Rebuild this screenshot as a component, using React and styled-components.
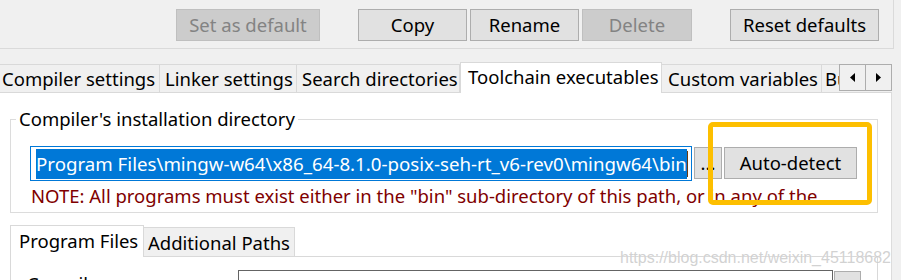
import React from 'react';
import styled, { createGlobalStyle } from 'styled-components';

const GlobalStyle = createGlobalStyle`
  html, body {
    margin: 0;
    padding: 0;
    background: #f0f0f0;
    overflow: hidden;
  }
  body {
    font-family: "Noto Sans", "Liberation Sans", sans-serif;
    font-size: 18.5px;
    color: #000000;
  }
`;

const Page = styled.div`
  position: relative;
  width: 901px;
  height: 280px;
  overflow: hidden;
  display: flex;
  flex-direction: column;
`;

/* top button bar */
const TopBar = styled.div`
  flex-shrink: 0;
  width: 894px;
  height: 49px;
  box-sizing: border-box;
  border-right: 1px solid #dadada;
  border-bottom: 1px solid #dadada;
  display: flex;
  align-items: flex-start;
  gap: 38px;
  padding: 9px 0 0 176px;
`;

const ButtonGroup = styled.div`
  display: flex;
  gap: 3px;
`;

const Button = styled.button`
  width: ${(p) => p.$w}px;
  height: 32px;
  padding: 0;
  margin: 0;
  font-family: inherit;
  font-size: 18.5px;
  line-height: 1;
  background: ${(p) => (p.disabled ? '#cccccc' : '#e1e1e1')};
  border: 1px solid ${(p) => (p.disabled ? '#bfbfbf' : '#adadad')};
  color: ${(p) => (p.disabled ? '#838383' : '#000000')};
  border-radius: 0;
`;

/* main tab strip */
const TabStrip = styled.div`
  flex-shrink: 0;
  margin-top: 13px;
  height: 30px;
  display: flex;
  align-items: flex-start;
`;

const TabList = styled.div`
  width: 839px;
  height: 31px;
  overflow: hidden;
  display: flex;
  align-items: flex-start;
  flex-shrink: 0;
  position: relative;
  z-index: 1;
`;

const Tab = styled.div`
  flex-shrink: 0;
  box-sizing: border-box;
  width: ${(p) => p.$w}px;
  height: ${(p) => (p.$active ? 31 : 28)}px;
  margin-top: ${(p) => (p.$active ? 0 : 2)}px;
  background: ${(p) => (p.$active ? '#ffffff' : '#f0f0f0')};
  border-top: 1px solid #d9d9d9;
  border-right: 1px solid #d9d9d9;
  border-left: ${(p) => (p.$active ? '1px solid #d9d9d9' : 'none')};
  padding-left: ${(p) => p.$pad}px;
  display: flex;
  align-items: center;
  white-space: nowrap;
  padding-bottom: ${(p) => (p.$active ? 3 : 0)}px;
`;

const ArrowGroup = styled.div`
  margin-top: 2px;
  display: flex;
`;

const ArrowButton = styled.div`
  width: 27px;
  height: 27px;
  box-sizing: border-box;
  background: #f0f0f0;
  border: 1px solid #adadad;
  margin-left: ${(p) => (p.$second ? -1 : 0)}px;
  display: flex;
  align-items: center;
  justify-content: center;
`;

/* white page */
const Panel = styled.div`
  width: 892px;
  flex: 1 0 auto;
  box-sizing: border-box;
  background: #ffffff;
  border-top: 1px solid #d9d9d9;
  border-right: 1px solid #dcdcdc;
  display: flex;
  flex-direction: column;
`;

const GroupBox = styled.fieldset`
  margin: 14px 13px 0 10px;
  padding: 15px 0 4px 19px;
  border: 1px solid #dcdcdc;
  min-width: 0;
`;

const Legend = styled.legend`
  margin-left: -14px;
  padding: 0 3px;
  line-height: 24px;
  font-size: 18.5px;
`;

const InputRow = styled.div`
  display: flex;
  align-items: flex-start;
  gap: 2px;
`;

const PathInput = styled.div`
  width: 662px;
  height: 35px;
  box-sizing: border-box;
  border: 1px solid #0078d7;
  padding: 0 5px;
  display: flex;
  align-items: center;
  overflow: hidden;
  white-space: nowrap;
`;

const Selection = styled.span`
  background: #0078d7;
  color: #ffffff;
  line-height: 30px;
  font-size: 18.7px;
`;

const Caret = styled.span`
  flex-shrink: 0;
  width: 1px;
  height: 26px;
  background: #6b3a10;
`;

const SmallButton = styled(Button)`
  margin-top: 1px;
`;

const Note = styled.div`
  margin-top: 3px;
  margin-left: 1px;
  line-height: 24px;
  color: #800000;
  white-space: nowrap;
`;

/* inner tab set */
const SubTabBar = styled.div`
  margin: 13px 13px 0 10px;
  height: 31px;
  box-sizing: border-box;
  border-bottom: 1px solid #d9d9d9;
  display: flex;
  align-items: flex-end;
`;

const SubTab = styled.div`
  box-sizing: border-box;
  width: ${(p) => p.$w}px;
  height: ${(p) => (p.$active ? 32 : 29)}px;
  margin-bottom: ${(p) => (p.$active ? -1 : 0)}px;
  background: ${(p) => (p.$active ? '#ffffff' : '#f0f0f0')};
  border: 1px solid #d9d9d9;
  border-bottom: none;
  border-left: ${(p) => (p.$active ? '1px solid #d9d9d9' : 'none')};
  padding-left: ${(p) => p.$pad}px;
  display: flex;
  align-items: center;
  padding-bottom: ${(p) => (p.$active ? 3 : 0)}px;
  white-space: nowrap;
`;

const SubPanel = styled.div`
  margin: 0 13px 0 10px;
  flex: 1;
  border-left: 1px solid #d9d9d9;
  border-right: 1px solid #d9d9d9;
  padding: 13px 0 0 16px;
  display: grid;
  grid-template-columns: 210px 595px 27px;
  column-gap: 1px;
  align-items: start;
`;

const FieldLabel = styled.div`
  line-height: 24px;
  margin-top: 2px;
`;

const FieldInput = styled.div`
  height: 30px;
  border: 1px solid #646464;
  background: #ffffff;
`;

const FieldButton = styled.div`
  margin-top: 1px;
  height: 30px;
  background: #e1e1e1;
  border: 1px solid #adadad;
`;

/* overlays */
const Highlight = styled.div`
  position: absolute;
  left: 708px;
  top: 122px;
  width: 164px;
  height: 83px;
  box-sizing: border-box;
  border: 5px solid #fdbf00;
  border-radius: 5px;
  pointer-events: none;
`;

const Watermark = styled.div`
  position: absolute;
  left: 620px;
  top: 249px;
  font-family: "Liberation Sans", Arial, sans-serif;
  font-size: 16px;
  color: rgba(190, 190, 190, 0.7);
  text-shadow: 0 0 1px rgba(255, 255, 255, 0.9);
  white-space: nowrap;
  pointer-events: none;
`;

const Triangle = ({ dir }) => (
  <svg width="5" height="9" viewBox="0 0 5 9">
    {dir === 'left' ? (
      <polygon points="5,0 5,9 0,4.5" fill="#000" />
    ) : (
      <polygon points="0,0 0,9 5,4.5" fill="#000" />
    )}
  </svg>
);

const tabs = [
  { label: 'Compiler settings', w: 160, pad: 2 },
  { label: 'Linker settings', w: 137, pad: 5 },
  { label: 'Search directories', w: 163, pad: 5 },
  { label: 'Toolchain executables', w: 202, pad: 7, active: true },
  { label: 'Custom variables', w: 160, pad: 6 },
  { label: 'Build options', w: 140, pad: 3 },
];

export default function App() {
  return (
    <Page>
      <GlobalStyle />
      <TopBar>
        <Button $w={144} disabled>
          Set as default
        </Button>
        <ButtonGroup>
          <Button $w={109}>Copy</Button>
          <Button $w={109}>Rename</Button>
          <Button $w={110} disabled>
            Delete
          </Button>
        </ButtonGroup>
        <Button $w={149}>Reset defaults</Button>
      </TopBar>

      <TabStrip>
        <TabList>
          {tabs.map((t) => (
            <Tab key={t.label} $w={t.w} $pad={t.pad} $active={t.active}>
              {t.label}
            </Tab>
          ))}
        </TabList>
        <ArrowGroup>
          <ArrowButton>
            <Triangle dir="left" />
          </ArrowButton>
          <ArrowButton $second>
            <Triangle dir="right" />
          </ArrowButton>
        </ArrowGroup>
      </TabStrip>

      <Panel>
        <GroupBox>
          <Legend>Compiler's installation directory</Legend>
          <InputRow>
            <PathInput>
              <Selection>Program Files\mingw-w64\x86_64-8.1.0-posix-seh-rt_v6-rev0\mingw64\bin</Selection>
              <Caret />
            </PathInput>
            <SmallButton $w={28}>...</SmallButton>
            <SmallButton $w={133}>Auto-detect</SmallButton>
          </InputRow>
          <Note>NOTE: All programs must exist either in the "bin" sub-directory of this path, or in any of the</Note>
        </GroupBox>

        <SubTabBar>
          <SubTab $w={134} $pad={8} $active>
            Program Files
          </SubTab>
          <SubTab $w={151} $pad={4}>
            Additional Paths
          </SubTab>
        </SubTabBar>
        <SubPanel>
          <FieldLabel>Compiler:</FieldLabel>
          <FieldInput />
          <FieldButton />
        </SubPanel>
      </Panel>

      <Highlight />
      <Watermark>https://blog.csdn.net/weixin_45118682</Watermark>
    </Page>
  );
}
